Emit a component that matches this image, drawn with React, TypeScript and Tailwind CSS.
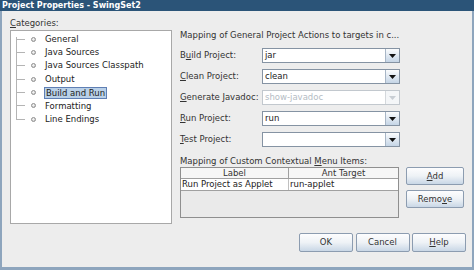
import type { ReactNode } from 'react';

const font = { fontFamily: '"DejaVu Sans", "Liberation Sans", sans-serif' };

const categories = [
    'General',
    'Java Sources',
    'Java Sources Classpath',
    'Output',
    'Build and Run',
    'Formatting',
    'Line Endings',
];

// underline the mnemonic letter at index i
function Mn({ text, i }: { text: string; i: number }) {
    return (
        <>
            {text.slice(0, i)}
            <span className="underline underline-offset-1">{text[i]}</span>
            {text.slice(i + 1)}
        </>
    );
}

function Bullet() {
    return (
        <span className="inline-block h-[5px] w-[5px] rounded-full border border-[#8e8e8e] bg-[radial-gradient(circle_at_40%_35%,#ffffff,#bdbdbd)]" />
    );
}

function Combo({ value, disabled = false }: { value: string; disabled?: boolean }) {
    return (
        <div
            className={`flex h-[15px] w-[138px] border bg-white ${
                disabled ? 'border-[#c2c8ce]' : 'border-[#8593a3]'
            }`}
        >
            <div
                className={`flex-1 pl-[2px] leading-[13px] ${
                    disabled ? 'text-[#b4bcc4]' : 'text-[#222]'
                }`}
            >
                {value}
            </div>
            <div
                className={`flex w-[14px] items-center justify-center border-l ${
                    disabled
                        ? 'border-[#d4d8dc] bg-[#f4f6f8]'
                        : 'border-[#a8b6c6] bg-gradient-to-b from-[#fbfcfd] to-[#c5d5e6]'
                }`}
            >
                <svg width="7" height="4" viewBox="0 0 7 4">
                    <path d="M0 0h7L3.5 4z" fill={disabled ? '#c8ced4' : '#111'} />
                </svg>
            </div>
        </div>
    );
}

function Btn({ children, w = 'w-[54px]', h = 'h-[19px]' }: { children: ReactNode; w?: string; h?: string }) {
    return (
        <div
            className={`${w} ${h} flex items-center justify-center rounded-[2px] border border-[#8c9cb0] bg-gradient-to-b from-[#fdfdfe] via-[#eef2f6] to-[#c9d7e6] text-[#333]`}
        >
            {children}
        </div>
    );
}

export default function App() {
    const rows: { label: ReactNode; value: string; disabled?: boolean }[] = [
        { label: <Mn text="Build Project:" i={1} />, value: 'jar' },
        { label: <Mn text="Clean Project:" i={0} />, value: 'clean' },
        { label: <Mn text="Generate Javadoc:" i={0} />, value: 'show-javadoc', disabled: true },
        { label: <Mn text="Run Project:" i={0} />, value: 'run' },
        { label: <Mn text="Test Project:" i={0} />, value: '' },
    ];

    return (
        <div style={font} className="flex h-[270px] w-[474px] flex-col overflow-hidden text-[8.5px] text-[#333]">
            {/* Title bar */}
            <div className="h-[11px] bg-[#2b5478] pl-[2px] text-[8px] leading-[11px] font-bold text-white">
                Project Properties - SwingSet2
            </div>

            {/* Body */}
            <div className="flex flex-1 flex-col border-x-2 border-b-[3px] border-x-[#8ea5bd] border-b-[#8ea5bd] bg-[#ededed]">
                <div className="flex pt-[6px] pl-[8px]">
                    {/* Left: categories */}
                    <div className="flex w-[162px] flex-col">
                        <div className="h-[13px] leading-[13px]">
                            <Mn text="Categories:" i={0} />
                        </div>
                        <div className="relative h-[194px] border border-[#a8a8a8] bg-white pt-[1.5px]">
                            <div className="absolute top-[6px] left-[5px] h-[82px] w-px bg-[#b4b4b4]" />
                            {categories.map((c) => (
                                <div key={c} className="flex h-[13.35px] items-center">
                                    <div className="ml-[5px] h-px w-[9px] bg-[#b4b4b4]" />
                                    <div className="ml-[6px] flex w-[14px] items-center">
                                        <Bullet />
                                    </div>
                                    {c === 'Build and Run' ? (
                                        <span className="-ml-[1px] border border-[#5f7fb4] bg-[#b9d0e8] px-[1px] leading-[10px] text-[#222]">
                                            {c}
                                        </span>
                                    ) : (
                                        <span className="text-[#222]">{c}</span>
                                    )}
                                </div>
                            ))}
                        </div>
                    </div>

                    {/* Right: mapping */}
                    <div className="mt-[12px] ml-[8px] flex flex-col">
                        <div className="h-[13px] leading-[13px]">
                            Mapping of General Project Actions to targets in c...
                        </div>
                        <div className="mt-[6px] flex flex-col gap-[6px]">
                            {rows.map((r, i) => (
                                <div key={i} className="flex items-center">
                                    <div className="w-[82px]">{r.label}</div>
                                    <Combo value={r.value} disabled={r.disabled} />
                                </div>
                            ))}
                        </div>
                        <div className="mt-[8px] h-[12px] leading-[12px]">
                            Mapping of Custom Contextual <Mn text="Menu Items:" i={0} />
                        </div>
                        <div className="flex">
                            <div className="flex h-[51px] w-[219px] flex-col border border-[#8f8f8f] bg-[#eaeaea]">
                                <div className="flex h-[11px] border-b border-[#a0a0a0] bg-[#f6f6f6] leading-[10px]">
                                    <div className="w-[108px] border-r border-[#a0a0a0] text-center">Label</div>
                                    <div className="flex-1 text-center">Ant Target</div>
                                </div>
                                <div className="flex h-[12px] border-b border-[#a0a0a0] bg-white leading-[11px] text-[#222]">
                                    <div className="w-[108px] border-r border-[#c0c0c0] pl-[1px]">Run Project as Applet</div>
                                    <div className="flex-1 pl-[1px]">run-applet</div>
                                </div>
                            </div>
                            <div className="ml-[7px] flex flex-col gap-[5px]">
                                <Btn w="w-[58px]" h="h-[18px]">
                                    <Mn text="Add" i={0} />
                                </Btn>
                                <Btn w="w-[58px]" h="h-[18px]">
                                    <Mn text="Remove" i={4} />
                                </Btn>
                            </div>
                        </div>
                    </div>
                </div>

                {/* Bottom buttons */}
                <div className="mt-auto mb-[15px] flex justify-end gap-[2.5px] pr-[6px]">
                    <Btn>OK</Btn>
                    <Btn>Cancel</Btn>
                    <Btn>
                        <Mn text="Help" i={0} />
                    </Btn>
                </div>
            </div>
        </div>
    );
}
